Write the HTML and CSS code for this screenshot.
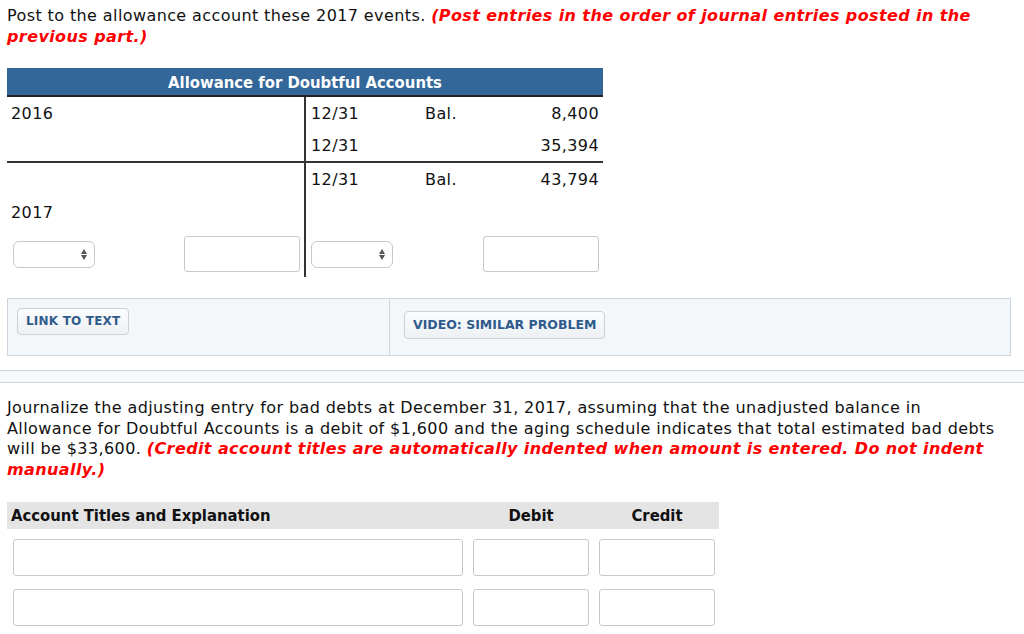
FILE: index.html
```html
<!DOCTYPE html>
<html>
<head>
<meta charset="utf-8">
<link rel="stylesheet" href="styles.css">
</head>
<body>
<p class="intro">Post to the allowance account these 2017 events. <em class="note">(Post entries in the order of journal entries posted in the previous part.)</em></p>

<div class="taccount">
  <div class="thead">Allowance for Doubtful Accounts</div>
  <div class="trow r1">
    <div class="tleft">2016</div>
    <div class="tright"><span class="date">12/31</span><span class="ref">Bal.</span><span class="amt">8,400</span></div>
  </div>
  <div class="trow r2 ruled">
    <div class="tleft"></div>
    <div class="tright"><span class="date">12/31</span><span class="ref"></span><span class="amt">35,394</span></div>
  </div>
  <div class="trow r3">
    <div class="tleft"></div>
    <div class="tright"><span class="date">12/31</span><span class="ref">Bal.</span><span class="amt">43,794</span></div>
  </div>
  <div class="trow r4">
    <div class="tleft">2017</div>
    <div class="tright"></div>
  </div>
  <div class="trow r5">
    <div class="tleft inputs">
      <div class="sel"><span class="arrows"><i class="up"></i><i class="dn"></i></span></div>
      <div class="box"></div>
    </div>
    <div class="tright inputs">
      <div class="sel"><span class="arrows"><i class="up"></i><i class="dn"></i></span></div>
      <div class="box"></div>
    </div>
  </div>
</div>

<div class="links">
  <div class="lcell first"><span class="btn">LINK TO TEXT</span></div>
  <div class="lcell second"><span class="btn narrow">VIDEO: SIMILAR PROBLEM</span></div>
</div>

<div class="divider"></div>

<p class="q">Journalize the adjusting entry for bad debts at December 31, 2017, assuming that the unadjusted balance in Allowance for Doubtful Accounts is a debit of $1,600 and the aging schedule indicates that total estimated bad debts will be $33,600. <em class="note">(Credit account titles are automatically indented when amount is entered. Do not indent manually.)</em></p>

<div class="journal">
  <div class="jhead">
    <div class="jc title">Account Titles and Explanation</div>
    <div class="jc num">Debit</div>
    <div class="jc num">Credit</div>
  </div>
  <div class="jrow">
    <div class="box wide"></div>
    <div class="box"></div>
    <div class="box"></div>
  </div>
  <div class="jrow">
    <div class="box wide"></div>
    <div class="box"></div>
    <div class="box"></div>
  </div>
</div>
</body>
</html>
```

FILE: styles.css
```css
html, body {
  margin: 0;
  padding: 0;
  background: #fff;
}
body {
  font-family: Verdana, "DejaVu Sans", sans-serif;
  font-size: 16px;
  letter-spacing: 0.4px;
  color: #111;
}
.intro {
  margin: 0;
  padding: 6px 7px 0 7px;
  line-height: 20.5px;
  width: 990px;
}
.note {
  color: #ff0000;
  font-weight: bold;
  font-style: italic;
}

.taccount {
  margin: 21px 0 0 7px;
  width: 596px;
}
.thead {
  background: #336699;
  color: #fff;
  font-family: "DejaVu Sans Condensed", "DejaVu Sans", sans-serif;
  font-weight: bold;
  font-size: 16.5px;
  letter-spacing: 0;
  text-align: center;
  height: 27px;
  line-height: 29px;
  border-bottom: 2px solid #222;
}
.trow {
  display: grid;
  grid-template-columns: 297px 299px;
}
.tleft {
  display: flex;
  align-items: center;
  padding-left: 4px;
}
.tright {
  display: flex;
  align-items: center;
  border-left: 2px solid #333;
  padding: 0 4px 0 5px;
}
.r1 { height: 32px; }
.r2 { height: 32px; }
.ruled { border-bottom: 2px solid #333; }
.r3 { height: 33px; }
.r4 { height: 32px; }
.r5 { height: 49px; }
.date { width: 114px; }
.ref { width: 80px; }
.amt { flex: 1; text-align: right; }

.inputs {
  display: flex;
  justify-content: space-between;
  align-items: center;
  padding-top: 2px;
}
.tleft.inputs { padding-left: 6px; padding-right: 4px; }
.tright.inputs { padding-left: 5px; padding-right: 4px; }
.sel {
  width: 82px;
  height: 27px;
  border: 1px solid #c8c8c8;
  border-radius: 6px;
  background: #fff;
  display: flex;
  justify-content: flex-end;
  align-items: center;
  padding-right: 7px;
  box-sizing: border-box;
  margin-top: 2px;
}
.arrows {
  display: flex;
  flex-direction: column;
  gap: 1px;
}
.arrows i {
  display: block;
  width: 0;
  height: 0;
  border-left: 3.5px solid transparent;
  border-right: 3.5px solid transparent;
}
.arrows .up { border-bottom: 5px solid #555; }
.arrows .dn { border-top: 5px solid #555; }

.box {
  width: 116px;
  height: 36px;
  border: 1px solid #c8c8c8;
  border-radius: 3px;
  box-sizing: border-box;
  background: #fff;
}

.links {
  margin: 21px 13px 0 7px;
  display: grid;
  grid-template-columns: 382px 1fr;
  background: #f4f7fa;
  border: 1px solid #cdd6df;
  height: 56px;
}
.lcell.first {
  border-right: 1px solid #cdd6df;
  padding: 9px 0 0 9px;
}
.lcell.second {
  padding: 12px 0 0 14px;
}
.btn {
  display: inline-block;
  font-family: Verdana, "DejaVu Sans", sans-serif;
  font-weight: bold;
  font-size: 12px;
  letter-spacing: 0.2px;
  color: #2f5b8c;
  background: linear-gradient(#fbfcfd, #eef1f4);
  border: 1px solid #c9d1da;
  border-radius: 4px;
  padding: 0 8px;
  height: 25px;
  line-height: 25px;
}
.btn.narrow {
  font-size: 12.5px;
  letter-spacing: 0;
  padding: 0 8px;
  height: 26px;
  line-height: 26px;
}

.divider {
  margin-top: 14px;
  height: 11px;
  background: #f6f8fa;
  border-top: 1px solid #cdd6df;
  border-bottom: 1px solid #cdd6df;
}

.q {
  margin: 0;
  padding: 15px 7px 0 7px;
  line-height: 20.5px;
  width: 990px;
}

.journal {
  margin: 22px 0 0 7px;
  width: 712px;
}
.jhead {
  display: grid;
  grid-template-columns: 450px 116px 116px;
  column-gap: 10px;
  padding-left: 6px;
  background: #e4e4e4;
  height: 27px;
  align-items: center;
  font-family: "DejaVu Sans Condensed", "DejaVu Sans", sans-serif;
  font-weight: bold;
  font-size: 16.5px;
  letter-spacing: 0;
  color: #111;
}
.jc.title { margin-left: -2px; }
.jc.num { text-align: center; }
.jrow {
  display: flex;
  column-gap: 10px;
  margin-top: 10px;
  padding-left: 6px;
}
.jrow + .jrow { margin-top: 13px; }
.jrow .box { width: 116px; height: 37px; }
.jrow .box.wide { width: 450px; }
```
